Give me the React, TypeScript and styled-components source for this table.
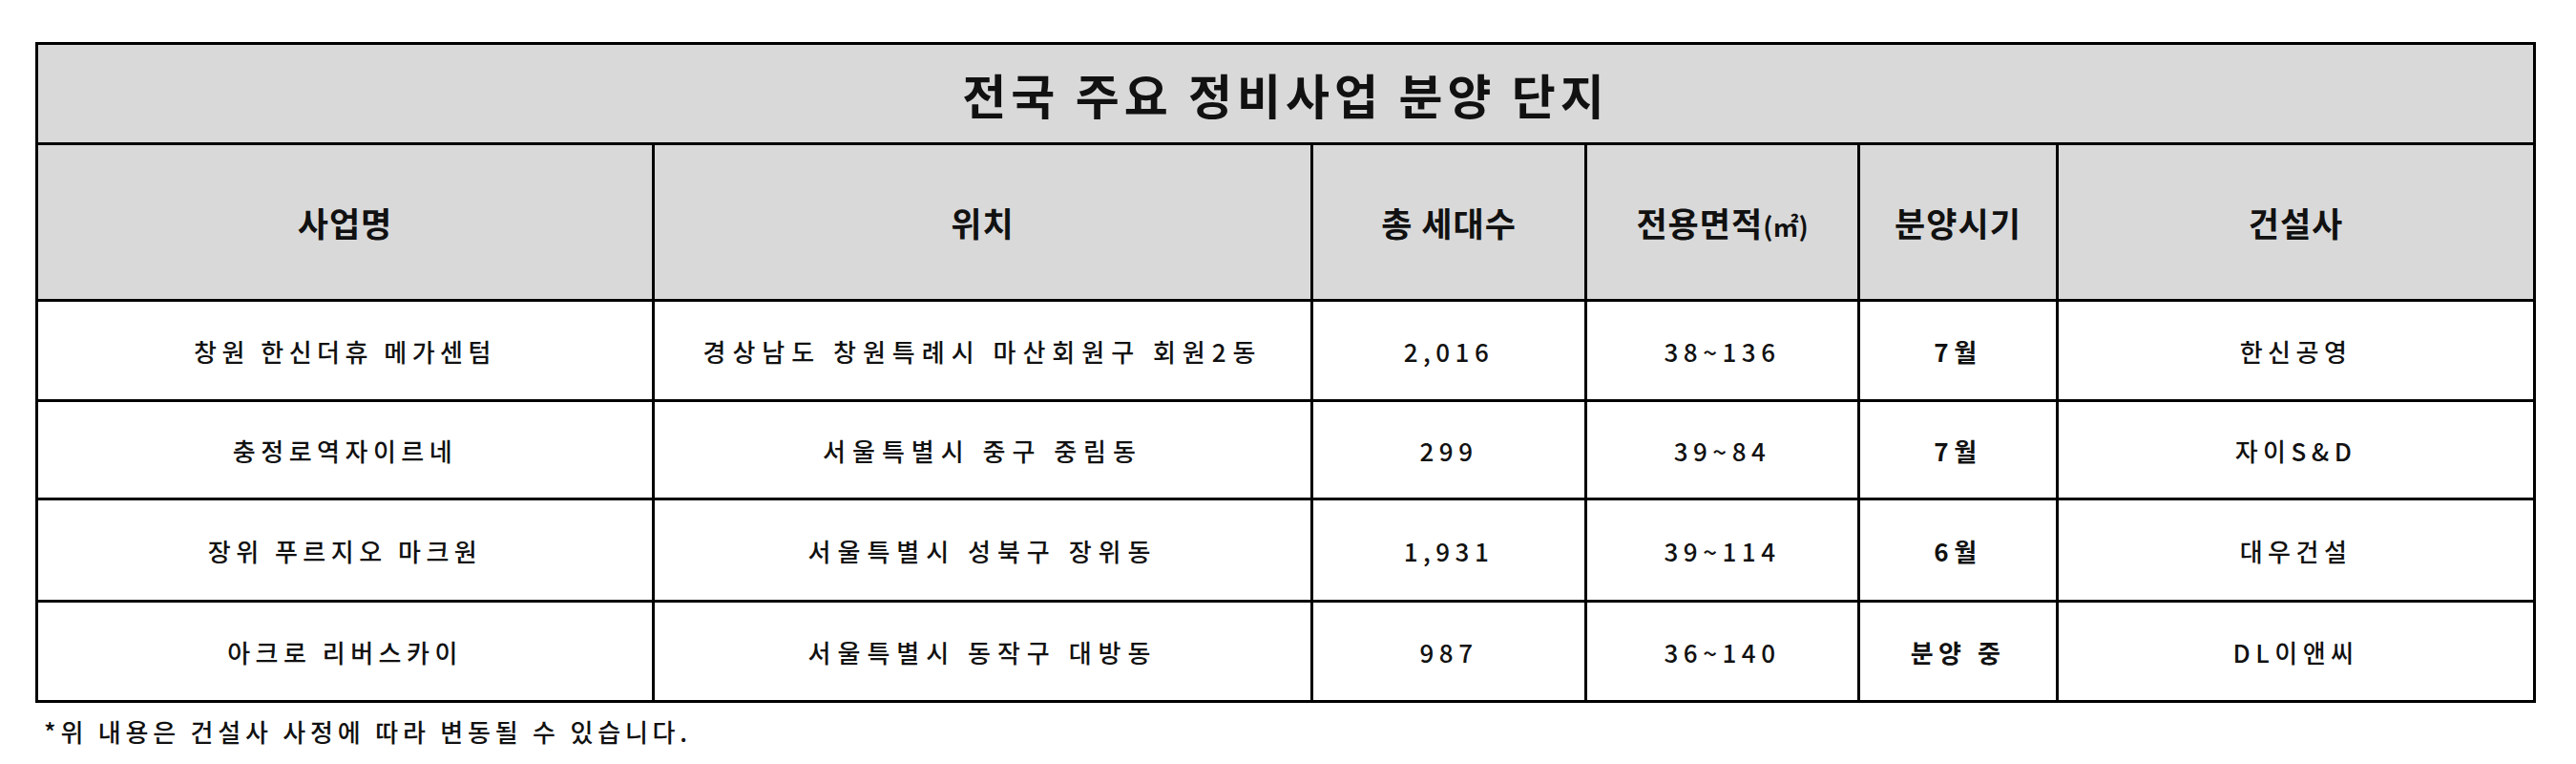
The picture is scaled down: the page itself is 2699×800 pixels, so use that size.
import React from 'react';
import styled, {createGlobalStyle} from "styled-components";

type ProjectType = {
    id: number
    name: string
    location: string
    households: string
    area: string
    period: string
    builder: string
}

const projects: ProjectType[] = [
    {id: 1, name: '창원 한신더휴 메가센텀', location: '경상남도 창원특례시 마산회원구 회원2동', households: '2,016', area: '38~136', period: '7월', builder: '한신공영'},
    {id: 2, name: '충정로역자이르네', location: '서울특별시 중구 중림동', households: '299', area: '39~84', period: '7월', builder: '자이S&D'},
    {id: 3, name: '장위 푸르지오 마크원', location: '서울특별시 성북구 장위동', households: '1,931', area: '39~114', period: '6월', builder: '대우건설'},
    {id: 4, name: '아크로 리버스카이', location: '서울특별시 동작구 대방동', households: '987', area: '36~140', period: '분양 중', builder: 'DL이앤씨'},
]

const columns = [
    {key: 'name', title: '사업명', width: 646},
    {key: 'location', title: '위치', width: 690},
    {key: 'households', title: '총 세대수', width: 287},
    {key: 'area', title: '전용면적', unit: '(㎡)', width: 286},
    {key: 'period', title: '분양시기', width: 208},
    {key: 'builder', title: '건설사', width: 500},
]

const rowHeights = [105, 103, 107, 105]

export default function App() {
    return (
        <>
            <GlobalStyle/>
            <Page>
                <Table>
                    <colgroup>
                        {columns.map(c => <col key={c.key} style={{width: c.width}}/>)}
                    </colgroup>
                    <thead>
                    <tr>
                        <TitleCell colSpan={columns.length}>전국 주요 정비사업 분양 단지</TitleCell>
                    </tr>
                    <tr>
                        {columns.map(c => (
                            <HeadCell key={c.key}>
                                {c.title}
                                {c.unit && <Unit>{c.unit}</Unit>}
                            </HeadCell>
                        ))}
                    </tr>
                    </thead>
                    <tbody>
                    {projects.map((p, i) => {
                        return (
                            <BodyRow key={p.id} $height={rowHeights[i]}>
                                <Cell>{p.name}</Cell>
                                <Cell $wide>{p.location}</Cell>
                                <Cell>{p.households}</Cell>
                                <Cell>{p.area}</Cell>
                                <Cell $strong>{p.period}</Cell>
                                <Cell>{p.builder}</Cell>
                            </BodyRow>
                        )
                    })}
                    </tbody>
                </Table>
                <Footnote>*위 내용은 건설사 사정에 따라 변동될 수 있습니다.</Footnote>
            </Page>
        </>
    );
}

const GlobalStyle = createGlobalStyle`
    body {
        margin: 0;
        background: #ffffff;
        font-family: "Noto Sans CJK KR", "Noto Sans", sans-serif;
        color: #111111;
    }
`

const Page = styled.div`
    padding: 44px 0 0 37px;
`

const Table = styled.table`
    width: 2617px;
    table-layout: fixed;
    border-collapse: collapse;
    border: 3px solid #000;
`

const TitleCell = styled.th`
    height: 102px;
    padding: 0;
    border: 3px solid #000;
    background: #d9d9d9;
    font-size: 50px;
    font-weight: 700;
    letter-spacing: 5px;
    text-align: center;
    vertical-align: middle;
`

const HeadCell = styled.th`
    height: 161px;
    padding: 0;
    border: 3px solid #000;
    background: #d9d9d9;
    font-size: 35px;
    font-weight: 700;
    letter-spacing: 1px;
    text-align: center;
    vertical-align: middle;
`

const Unit = styled.span`
    font-size: 27px;
    letter-spacing: 0;
`

const BodyRow = styled.tr<{ $height: number }>`
    height: ${p => p.$height}px;
`

const Cell = styled.td<{ $strong?: boolean, $wide?: boolean }>`
    padding: 0;
    border: 3px solid #000;
    font-size: 26px;
    font-weight: ${p => p.$strong ? 700 : 500};
    letter-spacing: ${p => p.$wide ? 7 : 5.5}px;
    text-align: center;
    vertical-align: middle;
    white-space: nowrap;
`

const Footnote = styled.div`
    margin-top: 15px;
    padding-left: 9px;
    font-size: 26px;
    font-weight: 500;
    line-height: 30px;
    letter-spacing: 4.8px;
`
